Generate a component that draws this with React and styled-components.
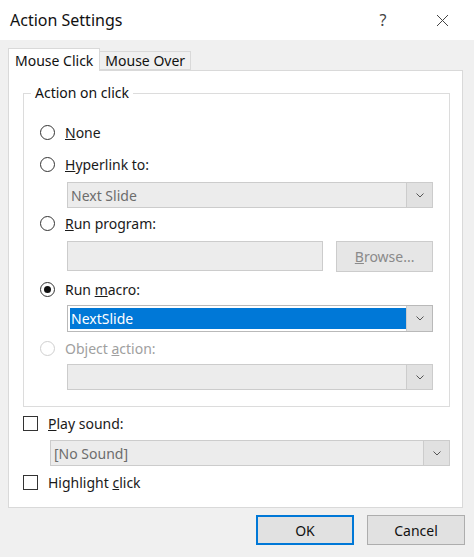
import React from "react";
import styled, { createGlobalStyle } from "styled-components";

const GlobalStyle = createGlobalStyle`
  html, body {
    margin: 0;
    padding: 0;
    background: #f0f0f0;
  }
  body {
    font-family: "Noto Sans", "Open Sans", "Liberation Sans", sans-serif;
    font-size: 14px;
    color: #1a1a1a;
  }
`;

const Window = styled.div`
  width: 474px;
  height: 557px;
  display: flex;
  flex-direction: column;
  background: #f0f0f0;
  overflow: hidden;
`;

const TitleBar = styled.div`
  height: 40px;
  flex-shrink: 0;
  background: #fff;
  display: flex;
  align-items: center;
  padding-left: 10px;
`;

const Title = styled.div`
  font-size: 16px;
  color: #111;
  flex: 1;
`;

const TitleButton = styled.div`
  width: ${(p) => p.$w}px;
  margin-right: ${(p) => p.$mr}px;
  display: flex;
  justify-content: center;
  align-items: center;
  color: #444;
  font-size: 16px;
`;

const Body = styled.div`
  flex: 1;
  padding: 8px 11px 0 8px;
  display: flex;
  flex-direction: column;
`;

const TabStrip = styled.div`
  display: flex;
  align-items: flex-end;
  height: 22px;
  position: relative;
  z-index: 1;
`;

const Tab = styled.div`
  height: ${(p) => (p.$active ? 23 : 19)}px;
  padding: 0 ${(p) => (p.$active ? 6 : 5)}px;
  margin-bottom: ${(p) => (p.$active ? -1 : 0)}px;
  display: flex;
  align-items: center;
  background: ${(p) => (p.$active ? "#fff" : "#f0f0f0")};
  border: 1px solid #d9d9d9;
  border-bottom: ${(p) => (p.$active ? "none" : "1px solid #d9d9d9")};
  border-left: ${(p) => (p.$first ? "1px solid #d9d9d9" : "none")};
  box-sizing: border-box;
  font-size: 14px;
  color: #111;
`;

const Panel = styled.div`
  height: 438px;
  box-sizing: border-box;
  background: #fff;
  border: 1px solid #d9d9d9;
  padding: 0 12px 0 14px;
  display: flex;
  flex-direction: column;
`;

const GroupBox = styled.div`
  margin-top: 22px;
  height: 314px;
  box-sizing: border-box;
  border: 1px solid #dcdcdc;
  padding: 0 16px 0 16px;
  display: flex;
  flex-direction: column;
`;

const Legend = styled.div`
  align-self: flex-start;
  margin: -11px 0 0 -9px;
  padding: 0 4px;
  line-height: 20px;
  background: #fff;
  color: #111;
`;

const OptionRow = styled.div`
  height: 22px;
  margin-top: ${(p) => p.$mt || 0}px;
  display: flex;
  align-items: center;
  gap: ${(p) => p.$gap || 10}px;
  color: ${(p) => (p.$disabled ? "#a0a0a0" : "#1a1a1a")};
`;

const Radio = styled.span`
  width: 15px;
  height: 15px;
  box-sizing: border-box;
  border-radius: 50%;
  border: 1px solid ${(p) => (p.$disabled ? "#cfcfcf" : "#333")};
  display: flex;
  align-items: center;
  justify-content: center;
  flex-shrink: 0;
  &::after {
    content: "";
    width: 7px;
    height: 7px;
    border-radius: 50%;
    background: ${(p) => (p.$checked ? "#111" : "transparent")};
  }
`;

const Checkbox = styled.span`
  width: 15px;
  height: 15px;
  box-sizing: border-box;
  border: 1px solid #333;
  flex-shrink: 0;
`;

const Key = styled.span`
  text-decoration: underline;
  text-underline-offset: 1px;
  text-decoration-thickness: 1px;
`;

const Indent = styled.div`
  margin-top: ${(p) => p.$mt || 0}px;
  margin-left: ${(p) => p.$left}px;
  display: flex;
  gap: 13px;
`;

const SelectField = styled.div`
  flex: 1;
  height: ${(p) => p.$h || 26}px;
  box-sizing: border-box;
  border: 1px solid ${(p) => (p.$active ? "#b9b9b9" : "#cccccc")};
  background: ${(p) => (p.$active ? "#fff" : "#ececec")};
  display: flex;
  align-items: stretch;
`;

const SelectValue = styled.div`
  flex: 1;
  display: flex;
  align-items: center;
  margin: ${(p) => (p.$selected ? "2px 0 2px 2px" : "0")};
  padding-left: ${(p) => (p.$selected ? 1 : 3)}px;
  background: ${(p) => (p.$selected ? "#0078d7" : "transparent")};
  color: ${(p) => (p.$selected ? "#fff" : "#6d6d6d")};
`;

const ArrowBox = styled.div`
  width: 25px;
  border-left: 1px solid #cccccc;
  background: #e1e1e1;
  display: flex;
  align-items: center;
  justify-content: center;
`;

const TextInput = styled.div`
  width: 257px;
  height: 30px;
  box-sizing: border-box;
  border: 1px solid #cccccc;
  background: #ececec;
`;

const PanelButton = styled.div`
  width: 97px;
  height: 31px;
  box-sizing: border-box;
  border: 1px solid #cccccc;
  background: #e6e6e6;
  color: #8a8a8a;
  display: flex;
  align-items: center;
  justify-content: center;
`;

const Footer = styled.div`
  display: flex;
  justify-content: flex-end;
  gap: 13px;
  padding: 7px 0 0 0;
  margin-right: -2px;
`;

const DialogButton = styled.div`
  width: 98px;
  height: 30px;
  box-sizing: border-box;
  border: ${(p) => (p.$default ? "2px solid #0078d7" : "1px solid #adadad")};
  background: #e1e1e1;
  color: #111;
  display: flex;
  align-items: center;
  justify-content: center;
`;

const Chevron = () => (
  <svg width="8" height="5" viewBox="0 0 8 5">
    <path d="M0.5 0.5 L4 4 L7.5 0.5" fill="none" stroke="#555" strokeWidth="1" />
  </svg>
);

const Dropdown = ({ value, selected, active, h }) => (
  <SelectField $active={active} $h={h}>
    <SelectValue $selected={selected}>{value}</SelectValue>
    <ArrowBox>
      <Chevron />
    </ArrowBox>
  </SelectField>
);

export default function App() {
  return (
    <>
      <GlobalStyle />
      <Window>
        <TitleBar>
          <Title>Action Settings</Title>
          <TitleButton $w={20} $mr={31}>?</TitleButton>
          <TitleButton $w={36} $mr={14}>
            <svg width="13" height="13" viewBox="0 0 13 13">
              <path d="M1 1 L12 12 M12 1 L1 12" stroke="#444" strokeWidth="1" />
            </svg>
          </TitleButton>
        </TitleBar>
        <Body>
          <TabStrip>
            <Tab $active $first>Mouse Click</Tab>
            <Tab>Mouse Over</Tab>
          </TabStrip>
          <Panel>
            <GroupBox>
              <Legend>Action on click</Legend>
              <OptionRow $mt={18}>
                <Radio />
                <span><Key>N</Key>one</span>
              </OptionRow>
              <OptionRow $mt={10}>
                <Radio />
                <span><Key>H</Key>yperlink to:</span>
              </OptionRow>
              <Indent $left={27} $mt={7}>
                <Dropdown value="Next Slide" />
              </Indent>
              <OptionRow $mt={4}>
                <Radio />
                <span><Key>R</Key>un program:</span>
              </OptionRow>
              <Indent $left={27} $mt={7}>
                <TextInput />
                <PanelButton><span><Key>B</Key>rowse...</span></PanelButton>
              </Indent>
              <OptionRow $mt={6}>
                <Radio $checked />
                <span>Run <Key>m</Key>acro:</span>
              </OptionRow>
              <Indent $left={27} $mt={5}>
                <Dropdown value="NextSlide" selected active h={27} />
              </Indent>
              <OptionRow $mt={5} $disabled>
                <Radio $disabled />
                <span>Object <Key>a</Key>ction:</span>
              </OptionRow>
              <Indent $left={27} $mt={5}>
                <Dropdown value="" />
              </Indent>
            </GroupBox>
            <OptionRow $mt={5} $gap={10}>
              <Checkbox />
              <span><Key>P</Key>lay sound:</span>
            </OptionRow>
            <Indent $left={27} $mt={6}>
              <Dropdown value="[No Sound]" />
            </Indent>
            <OptionRow $mt={5} $gap={10}>
              <Checkbox />
              <span>Highlight <Key>c</Key>lick</span>
            </OptionRow>
          </Panel>
          <Footer>
            <DialogButton $default>OK</DialogButton>
            <DialogButton>Cancel</DialogButton>
          </Footer>
        </Body>
      </Window>
    </>
  );
}
